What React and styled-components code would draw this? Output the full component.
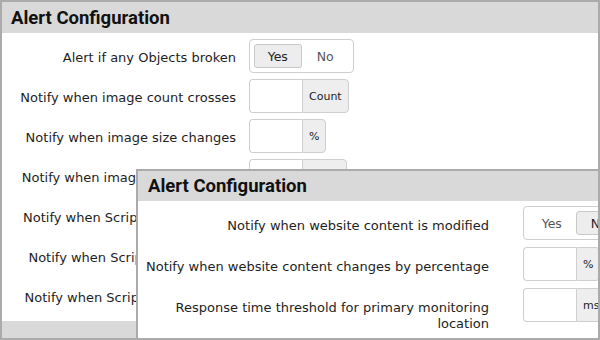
import React from "react";
import styled, { createGlobalStyle } from "styled-components";

const GlobalStyle = createGlobalStyle`
  html, body {
    margin: 0;
    padding: 0;
    background: #fff;
  }
  body {
    font-family: "DejaVu Sans", Verdana, sans-serif;
    color: #1e1e1e;
  }
`;

const Stage = styled.div`
  position: relative;
  width: 600px;
  height: 340px;
  overflow: hidden;
`;

const Panel = styled.section`
  box-sizing: border-box;
  width: 600px;
  height: 340px;
  border: 2px solid #ababab;
  background: #fff;
  display: flex;
  flex-direction: column;
`;

const FloatingPanel = styled(Panel)`
  position: absolute;
  left: 136px;
  top: 169px;
  width: 464px;
  height: 171px;
  overflow: hidden;
`;

const Header = styled.h2`
  margin: 0;
  height: ${(p) => p.$height}px;
  padding-left: ${(p) => p.$indent}px;
  display: flex;
  align-items: center;
  background: #d9d9d9;
  font-family: Roboto, "Liberation Sans", sans-serif;
  font-weight: 700;
  font-size: 18.5px;
  color: #111;
  flex-shrink: 0;
`;

const Body = styled.div`
  flex: 1;
  padding: ${(p) => p.$pad};
  display: flex;
  flex-direction: column;
  gap: ${(p) => p.$gap}px;
`;

const Footer = styled.div`
  height: 17px;
  background: #d9d9d9;
  flex-shrink: 0;
`;

const Row = styled.div`
  display: grid;
  grid-template-columns: ${(p) => p.$labelWidth}px auto;
  column-gap: ${(p) => p.$gap}px;
  align-items: start;
  padding: 3px 0;
  flex-shrink: 0;
`;

const Label = styled.div`
  text-align: right;
  font-size: 13px;
  line-height: 16px;
  padding-top: ${(p) => p.$top}px;
  white-space: ${(p) => (p.$wrap ? "normal" : "nowrap")};
  overflow: hidden;
`;

const Toggle = styled.div`
  box-sizing: border-box;
  height: 34px;
  width: 105px;
  padding: 4px;
  border: 1px solid #cfcfcf;
  border-radius: 4px;
  display: flex;
`;

const ToggleOption = styled.div`
  box-sizing: border-box;
  width: 48px;
  height: 24px;
  display: flex;
  align-items: center;
  justify-content: center;
  font-size: 12.5px;
  color: ${(p) => (p.$active ? "#222" : "#555")};
  background: ${(p) => (p.$active ? "#ededed" : "transparent")};
  border: 1px solid ${(p) => (p.$active ? "#c9c9c9" : "transparent")};
  border-radius: 3px;
`;

const InputGroup = styled.div`
  display: flex;
  height: 34px;
`;

const Input = styled.div`
  box-sizing: border-box;
  width: 53px;
  height: 34px;
  border: 1px solid #cfcfcf;
  border-right: none;
  border-radius: 4px 0 0 4px;
  background: #fff;
`;

const Addon = styled.div`
  box-sizing: border-box;
  height: 34px;
  padding: 0 6px;
  display: flex;
  align-items: center;
  justify-content: center;
  font-size: 11px;
  color: #222;
  background: #eeeeee;
  border: 1px solid #cfcfcf;
  border-radius: 0 4px 4px 0;
`;

const outerRows = [
  { label: "Alert if any Objects broken", toggle: "yes" },
  { label: "Notify when image count crosses", addon: "Count" },
  { label: "Notify when image size changes", addon: "%" },
  { label: "Notify when image type changes", addon: "Bytes" },
  { label: "Notify when Script count crosses", addon: "Count" },
  { label: "Notify when Script size changes", addon: "%" },
  { label: "Notify when Script type changes", addon: "Bytes" },
];

const innerRows = [
  { label: "Notify when website content is modified", toggle: "no" },
  { label: "Notify when website content changes by percentage", addon: "%" },
  { label: "Response time threshold for primary monitoring location", addon: "ms" },
  { label: "Response time threshold for secondary monitoring location", addon: "ms" },
];

function Control({ row }) {
  if (row.toggle) {
    return (
      <Toggle>
        <ToggleOption $active={row.toggle === "yes"}>Yes</ToggleOption>
        <ToggleOption $active={row.toggle === "no"}>No</ToggleOption>
      </Toggle>
    );
  }
  return (
    <InputGroup>
      <Input />
      <Addon>{row.addon}</Addon>
    </InputGroup>
  );
}

export default function App() {
  return (
    <>
      <GlobalStyle />
      <Stage>
        <Panel>
          <Header $height={31} $indent={9}>Alert Configuration</Header>
          <Body $pad="3px 0 0" $gap={0}>
            {outerRows.map((row) => (
              <Row key={row.label} $labelWidth={234} $gap={13}>
                <Label $top={11}>{row.label}</Label>
                <Control row={row} />
              </Row>
            ))}
          </Body>
          <Footer />
        </Panel>

        <FloatingPanel>
          <Header $height={30} $indent={10}>Alert Configuration</Header>
          <Body $pad="2px 0 0" $gap={1}>
            {innerRows.map((row) => (
              <Row key={row.label} $labelWidth={351} $gap={34}>
                <Label $wrap $top={12}>{row.label}</Label>
                <Control row={row} />
              </Row>
            ))}
          </Body>
        </FloatingPanel>
      </Stage>
    </>
  );
}
